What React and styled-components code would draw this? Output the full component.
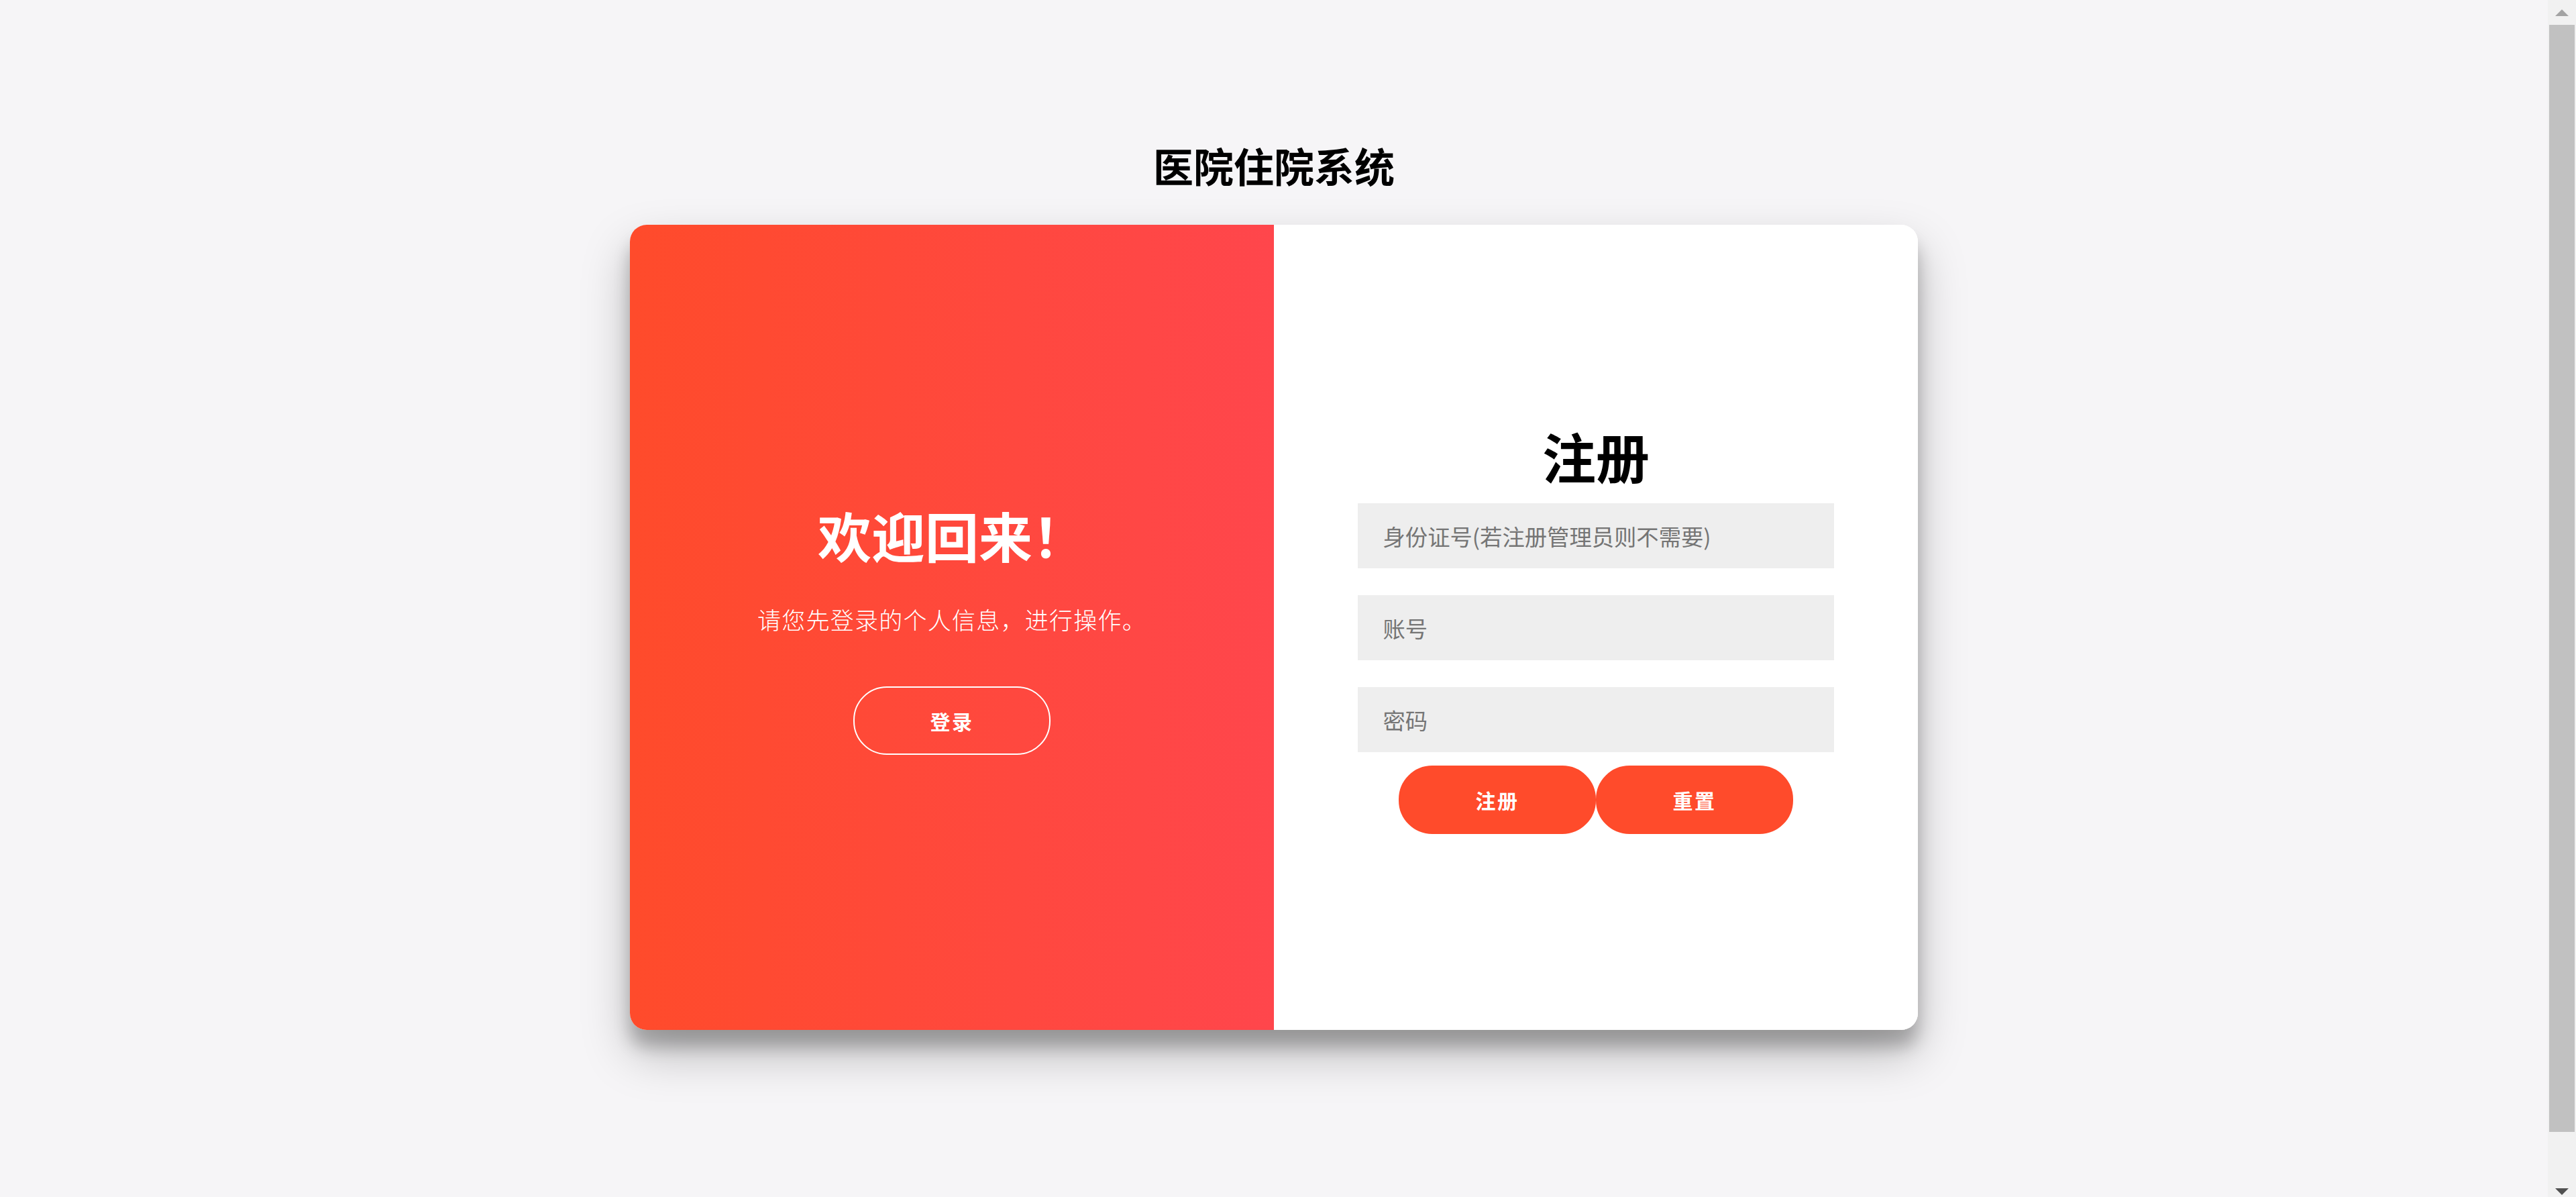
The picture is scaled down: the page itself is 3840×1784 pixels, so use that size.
import React from 'react';
import styled, { createGlobalStyle } from 'styled-components';

const GlobalStyle = createGlobalStyle`
  * {
    box-sizing: border-box;
  }

  html, body {
    overflow: hidden;
  }

  body {
    margin: 0;
    background: #f6f5f7;
    font-family: "Microsoft YaHei", "Noto Sans CJK SC", "Noto Sans", sans-serif;
  }
`;

const Page = styled.div`
  display: flex;
  flex-direction: column;
  justify-content: center;
  align-items: center;
  height: 100vh;
  margin-top: -50px;
  padding-right: 42px;
`;

const SiteTitle = styled.h2`
  font-size: 60px;
  font-weight: bold;
  line-height: 86px;
  margin: 54px 0 46px;
  color: #000;
`;

const Container = styled.div`
  background: #fff;
  border-radius: 25px;
  box-shadow: 0 35px 70px rgba(0, 0, 0, 0.25), 0 25px 25px rgba(0, 0, 0, 0.22);
  overflow: hidden;
  width: 1920px;
  min-height: 1200px;
  display: flex;
`;

const OverlayPanel = styled.div`
  width: 50%;
  display: flex;
  flex-direction: column;
  align-items: center;
  justify-content: center;
  padding: 0 100px;
  text-align: center;
  color: #fff;
  background: linear-gradient(to right, #ff4b2b, #ff464c);
`;

const Form = styled.form`
  width: 50%;
  background: #fff;
  display: flex;
  flex-direction: column;
  align-items: center;
  justify-content: center;
  padding: 0 125px;
  text-align: center;
`;

const Heading = styled.h1`
  font-size: 80px;
  font-weight: bold;
  line-height: 103px;
  margin: 0;
  color: ${(p) => (p.$light ? '#fff' : '#000')};
`;

const Lead = styled.p`
  font-size: 35px;
  font-weight: 300;
  line-height: 50px;
  letter-spacing: 1.25px;
  margin: 50px 0 75px;
`;

const Input = styled.input`
  background: #eee;
  border: none;
  outline: none;
  width: 100%;
  padding: 30px 37.5px;
  margin: 20px 0;
  font-family: inherit;
  font-size: 33.33px;
  line-height: 37.3px;
  color: #333;

  &::placeholder {
    color: #757575;
  }
`;

const ButtonRow = styled.div`
  display: flex;
  justify-content: center;
`;

const Button = styled.button`
  border-radius: 50px;
  border: 2.5px solid ${(p) => (p.$ghost ? '#fff' : '#ff4b2b')};
  background: ${(p) => (p.$ghost ? 'transparent' : '#ff4b2b')};
  color: #fff;
  font-family: inherit;
  font-size: 30px;
  font-weight: bold;
  line-height: 38px;
  letter-spacing: 2.5px;
  padding: 30px 112.5px;
  cursor: pointer;
  white-space: nowrap;
`;

/* browser scrollbar, drawn over the right edge */
const Scrollbar = styled.div`
  position: fixed;
  top: 0;
  right: 0;
  width: 42px;
  height: 100vh;
  background: #f1f1f1;
  display: flex;
  flex-direction: column;
`;

const ScrollButton = styled.div`
  flex: ${(p) => (p.$down ? '1 0 0' : '0 0 37px')};
  display: flex;
  justify-content: center;
  align-items: ${(p) => (p.$down ? 'flex-end' : 'center')};
  padding-bottom: ${(p) => (p.$down ? '3px' : '0')};
`;

const Arrow = styled.span`
  width: 0;
  height: 0;
  border-left: 10px solid transparent;
  border-right: 10px solid transparent;
  ${(p) =>
    p.$down
      ? 'border-top: 10px solid #505050;'
      : 'border-bottom: 10px solid #a3a3a3;'}
`;

const Thumb = styled.div`
  flex: 0 0 1650px;
  margin: 0 2px;
  background: #c1c1c1;
`;

export default function App() {
  return (
    <>
      <GlobalStyle />
      <Page>
        <SiteTitle>医院住院系统</SiteTitle>
        <Container>
          <OverlayPanel>
            <Heading $light>欢迎回来！</Heading>
            <Lead>请您先登录的个人信息，进行操作。</Lead>
            <Button $ghost type="button">登录</Button>
          </OverlayPanel>
          <Form onSubmit={(e) => e.preventDefault()}>
            <Heading>注册</Heading>
            <Input type="text" placeholder="身份证号(若注册管理员则不需要)" />
            <Input type="text" placeholder="账号" />
            <Input type="password" placeholder="密码" />
            <ButtonRow>
              <Button type="submit">注册</Button>
              <Button type="reset">重置</Button>
            </ButtonRow>
          </Form>
        </Container>
      </Page>
      <Scrollbar>
        <ScrollButton>
          <Arrow />
        </ScrollButton>
        <Thumb />
        <ScrollButton $down>
          <Arrow $down />
        </ScrollButton>
      </Scrollbar>
    </>
  );
}
